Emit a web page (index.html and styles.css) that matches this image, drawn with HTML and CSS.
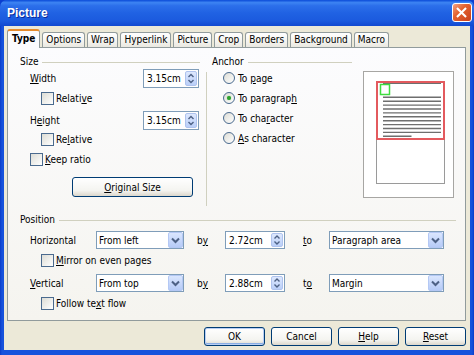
FILE: index.html
```html
<!DOCTYPE html>
<html>
<head>
<meta charset="utf-8">
<title>Picture</title>
<link rel="stylesheet" href="styles.css">
</head>
<body>
<div class="window">
  <div class="titlebar">
    <span class="title">Picture</span>
    <span class="close">
      <svg width="20" height="19" viewBox="0 0 20 19"><path d="M6 5.5 L14 13.5 M14 5.5 L6 13.5" stroke="#fff" stroke-width="2.2" stroke-linecap="square"/></svg>
    </span>
  </div>
  <div class="client">
    <div class="tabs">
      <div class="tab active">Type</div>
      <div class="tab">Options</div>
      <div class="tab">Wrap</div>
      <div class="tab">Hyperlink</div>
      <div class="tab">Picture</div>
      <div class="tab">Crop</div>
      <div class="tab">Borders</div>
      <div class="tab">Background</div>
      <div class="tab">Macro</div>
    </div>
    <div class="panel">
      <div class="top">
        <div class="size">
          <div class="heading"><span>Size</span><i class="rule"></i></div>
          <div class="frow">
            <span class="flabel"><u>W</u>idth</span>
            <span class="spin w56"><span>3.15cm</span><span class="spinbtn"><svg width="10" height="13" viewBox="0 0 10 13"><path d="M2.5 5 L5 2.5 L7.5 5 M2.5 8 L5 10.5 L7.5 8" fill="none" stroke="#4D6185" stroke-width="1.4"/></svg></span></span>
          </div>
          <div class="check sub r1"><span class="box"></span><span>Relati<u>v</u>e</span></div>
          <div class="frow r2">
            <span class="flabel">H<u>e</u>ight</span>
            <span class="spin w56"><span>3.15cm</span><span class="spinbtn"><svg width="10" height="13" viewBox="0 0 10 13"><path d="M2.5 5 L5 2.5 L7.5 5 M2.5 8 L5 10.5 L7.5 8" fill="none" stroke="#4D6185" stroke-width="1.4"/></svg></span></span>
          </div>
          <div class="check sub r3"><span class="box"></span><span>Re<u>l</u>ative</span></div>
          <div class="check main r4"><span class="box"></span><span><u>K</u>eep ratio</span></div>
          <div class="btn original"><span><u>O</u>riginal Size</span></div>
        </div>
        <div class="vsep"></div>
        <div class="anchor">
          <div class="heading"><span>Anchor</span><i class="rule"></i></div>
          <div class="radio"><span class="dot"></span><span>To <u>p</u>age</span></div>
          <div class="radio on"><span class="dot"></span><span>To paragrap<u>h</u></span></div>
          <div class="radio"><span class="dot"></span><span>To cha<u>r</u>acter</span></div>
          <div class="radio"><span class="dot"></span><span><u>A</u>s character</span></div>
        </div>
        <div class="preview">
          <svg width="91" height="127" viewBox="0 0 91 127">
            <rect x="0.5" y="0.5" width="90" height="126" fill="#fff" stroke="#A7A6A3"/>
            <rect x="13.5" y="10.5" width="68" height="102" fill="#fff" stroke="#9A9A9A"/>
            <g stroke="#6E6E6E" stroke-width="1.4">
              <line x1="20" y1="12.3" x2="78" y2="12.3"/>
              <line x1="20" y1="26.3" x2="78" y2="26.3"/>
              <line x1="20" y1="30.2" x2="78" y2="30.2"/>
              <line x1="20" y1="34.1" x2="78" y2="34.1"/>
              <line x1="20" y1="38" x2="78" y2="38"/>
              <line x1="20" y1="41.9" x2="78" y2="41.9"/>
              <line x1="20" y1="45.8" x2="78" y2="45.8"/>
              <line x1="20" y1="49.7" x2="78" y2="49.7"/>
              <line x1="20" y1="53.6" x2="78" y2="53.6"/>
              <line x1="20" y1="57.5" x2="78" y2="57.5"/>
              <line x1="20" y1="61.4" x2="78" y2="61.4"/>
              <line x1="20" y1="65.3" x2="48.5" y2="65.3"/>
            </g>
            <rect x="17.5" y="13.5" width="9" height="10" fill="none" stroke="#3EDC3E" stroke-width="1.5"/>
            <rect x="14" y="11" width="67" height="57" fill="none" stroke="#E35A5E" stroke-width="2"/>
          </svg>
        </div>
      </div>
      <div class="position">
        <div class="heading"><span>Position</span><i class="rule"></i></div>
        <div class="prow">
          <span class="plabel">Horizontal</span>
          <span class="select s1"><span>From left</span><span class="dd"><svg width="15" height="16" viewBox="0 0 15 16"><path d="M4 6.5 L7.5 10 L11 6.5" fill="none" stroke="#4D6185" stroke-width="2"/></svg></span></span>
          <span class="by">b<u>y</u></span>
          <span class="spin w60"><span>2.72cm</span><span class="spinbtn"><svg width="10" height="12" viewBox="0 0 10 12"><path d="M2.5 4.5 L5 2 L7.5 4.5 M2.5 7.5 L5 10 L7.5 7.5" fill="none" stroke="#4D6185" stroke-width="1.4"/></svg></span></span>
          <span class="to"><u>t</u>o</span>
          <span class="select s2"><span>Paragraph area</span><span class="dd"><svg width="15" height="16" viewBox="0 0 15 16"><path d="M4 6.5 L7.5 10 L11 6.5" fill="none" stroke="#4D6185" stroke-width="2"/></svg></span></span>
        </div>
        <div class="check sub m1"><span class="box"></span><span><u>M</u>irror on even pages</span></div>
        <div class="prow p2">
          <span class="plabel"><u>V</u>ertical</span>
          <span class="select s1"><span>From top</span><span class="dd"><svg width="15" height="16" viewBox="0 0 15 16"><path d="M4 6.5 L7.5 10 L11 6.5" fill="none" stroke="#4D6185" stroke-width="2"/></svg></span></span>
          <span class="by">b<u>y</u></span>
          <span class="spin w60"><span>2.88cm</span><span class="spinbtn"><svg width="10" height="12" viewBox="0 0 10 12"><path d="M2.5 4.5 L5 2 L7.5 4.5 M2.5 7.5 L5 10 L7.5 7.5" fill="none" stroke="#4D6185" stroke-width="1.4"/></svg></span></span>
          <span class="to">t<u>o</u></span>
          <span class="select s2"><span>Margin</span><span class="dd"><svg width="15" height="16" viewBox="0 0 15 16"><path d="M4 6.5 L7.5 10 L11 6.5" fill="none" stroke="#4D6185" stroke-width="2"/></svg></span></span>
        </div>
        <div class="check sub m2"><span class="box"></span><span>Follow te<u>x</u>t flow</span></div>
      </div>
    </div>
    <div class="buttons">
      <div class="btn default"><span>OK</span></div>
      <div class="btn"><span>Cancel</span></div>
      <div class="btn"><span><u>H</u>elp</span></div>
      <div class="btn"><span><u>R</u>eset</span></div>
    </div>
  </div>
</div>
</body>
</html>
```

FILE: styles.css
```css
* { box-sizing: border-box; }
html, body { margin: 0; padding: 0; }
body {
  width: 474px;
  height: 355px;
  overflow: hidden;
  font-family: "DejaVu Sans Condensed", "Liberation Sans", sans-serif;
  font-size: 10px;
  color: #000;
  background: #0B3FD0;
}
u { text-decoration: underline; text-underline-offset: 1px; }

.window {
  width: 474px;
  height: 355px;
  display: flex;
  flex-direction: column;
  background: linear-gradient(to right, #0A3CC8, #1652DC 2px, #1652DC 472px, #0A3CC8);
  border-radius: 7px 7px 0 0;
  overflow: hidden;
}

.titlebar {
  height: 26px;
  flex: none;
  display: flex;
  align-items: center;
  justify-content: space-between;
  padding: 0 2px 0 7px;
  background: linear-gradient(to bottom, #0A4AD8 0%, #3D84F2 10%, #2C6FEA 22%, #2062E3 50%, #1B5ADE 80%, #1249D0 100%);
}
.title {
  color: #fff;
  font: bold 12px "Liberation Sans", sans-serif;
  text-shadow: 1px 1px 0 #0A2A9A;
}
.close {
  width: 20px;
  height: 19px;
  margin-top: -1px;
  border: 1px solid #fff;
  border-radius: 3px;
  background: linear-gradient(135deg, #F2A283 0%, #E3622F 40%, #C9401C 100%);
  display: flex;
}
.close svg { margin: -1px 0 0 -1px; }

.client {
  flex: 1;
  margin: 0 4px 5px 4px;
  background: #ECE9D8;
  display: flex;
  flex-direction: column;
}

/* Tabs */
.tabs {
  height: 21px;
  flex: none;
  display: flex;
  align-items: flex-end;
  padding-left: 3px;
  position: relative;
  z-index: 1;
}
.tab {
  height: 15px;
  line-height: 14px;
  padding: 0 3px;
  margin-left: 2px;
  border: 1px solid #919B9C;
  border-bottom: none;
  border-radius: 3px 3px 0 0;
  background: linear-gradient(#FFFFFF, #F4F3EF 60%, #EAE8E0);
  white-space: nowrap;
}
.tab.active {
  height: 19px;
  line-height: 16px;
  margin-left: 0;
  margin-bottom: -1px;
  padding: 0 4px;
  border-top: 2px solid #E68B2C;
  background: #FCFCFE;
  font-weight: bold;
}

/* Panel */
.panel {
  height: 274px;
  flex: none;
  margin: 0 4px 0 3px;
  border: 1px solid #919B9C;
  background: linear-gradient(#FCFCFE, #F5F4EF);
  padding: 8px 9px 0 12px;
}

.heading {
  display: flex;
  align-items: center;
  height: 12px;
  line-height: 12px;
}
.heading .rule {
  flex: 1;
  height: 1px;
  background: #D0D0BF;
  margin-left: 4px;
}

.top { display: flex; height: 150px; }
.size { width: 186px; padding-right: 6px; }
.vsep { width: 1px; background: #D0D0BF; margin-top: 16px; }
.anchor { width: 146px; margin-left: 5px; padding-right: 6px; }
.preview { margin: 15px 0 0 5px; height: 127px; }
.preview svg { display: block; }

.frow {
  display: flex;
  align-items: center;
  height: 19px;
  padding-left: 10px;
  margin-top: 1px;
}
.frow.r2 { margin-top: 5px; }
.flabel { width: 113px; }

.spin {
  height: 19px;
  border: 1px solid #7F9DB9;
  background: #fff;
  display: flex;
  align-items: center;
  justify-content: space-between;
  padding-left: 3px;
}
.spin.w56 { width: 56px; }
.spin.w60 { width: 60px; height: 18px; }
.spinbtn {
  width: 12px;
  height: 15px;
  margin-right: 1px;
  border: 1px solid #AFC3EE;
  border-radius: 2px;
  background: linear-gradient(#DDE8FE, #BACFF8);
  display: flex;
}
.spin.w60 .spinbtn { height: 14px; }

.check {
  display: flex;
  align-items: center;
  height: 16px;
}
.check.sub { padding-left: 21px; }
.check.main { padding-left: 10px; }
.check.r1 { margin-top: 2px; }
.check.r3 { margin-top: 1px; }
.check.r4 { margin-top: 4px; }
.check.m1 { margin-top: 3px; }
.check.m2 { margin-top: 3px; }
.box {
  width: 13px;
  height: 13px;
  border: 1px solid #4A6A8E;
  background: linear-gradient(135deg, #DCDCD5, #FFFFFF);
  margin-right: 2px;
  flex: none;
}

.radio {
  display: flex;
  align-items: center;
  height: 20px;
  padding-left: 11px;
}
.dot {
  width: 12px;
  height: 12px;
  border-radius: 50%;
  border: 1px solid #4A6A8E;
  background: linear-gradient(135deg, #DCDCD5, #FFFFFF);
  margin-right: 3px;
  display: flex;
  align-items: center;
  justify-content: center;
  flex: none;
}
.radio.on .dot::after {
  content: "";
  width: 4px;
  height: 4px;
  border-radius: 50%;
  background: #2FA12F;
  box-shadow: 0 0 1px #5BC85B;
}

.btn {
  height: 19px;
  border: 1px solid #003C74;
  border-radius: 3px;
  background: linear-gradient(#FFFFFF, #F4F4F0 70%, #DCD7CC);
  display: flex;
  align-items: center;
  justify-content: center;
}
.btn.original { width: 121px; height: 20px; margin: 10px 0 0 52px; }
.btn.default { box-shadow: inset 0 0 0 1px #B8CEF4, inset 0 -1px 0 1px #89ADE4; }

/* Position */
.position { margin-top: 8px; }
.prow {
  display: flex;
  align-items: center;
  height: 18px;
  padding-left: 10px;
  margin-top: 5px;
}
.prow.p2 { margin-top: 6px; }
.plabel { width: 66px; }
.select {
  height: 18px;
  border: 1px solid #7F9DB9;
  background: #fff;
  display: flex;
  align-items: center;
  justify-content: space-between;
  padding-left: 2px;
  white-space: nowrap;
}
.select.s1 { width: 88px; }
.select.s2 { width: 115px; }
.dd {
  width: 15px;
  height: 16px;
  border: 1px solid #B4C8F4;
  border-radius: 2px;
  background: linear-gradient(#DAE6FE, #B6CBF7);
  display: flex;
  align-items: center;
  justify-content: center;
}
.dd svg { flex: none; }
.by { margin-left: 13px; width: 28px; }
.to { margin-left: 18px; width: 26px; }

/* Buttons */
.buttons {
  display: flex;
  justify-content: flex-end;
  gap: 6px;
  margin-top: 6px;
  padding-right: 4px;
}
.buttons .btn { width: 61px; }
```
